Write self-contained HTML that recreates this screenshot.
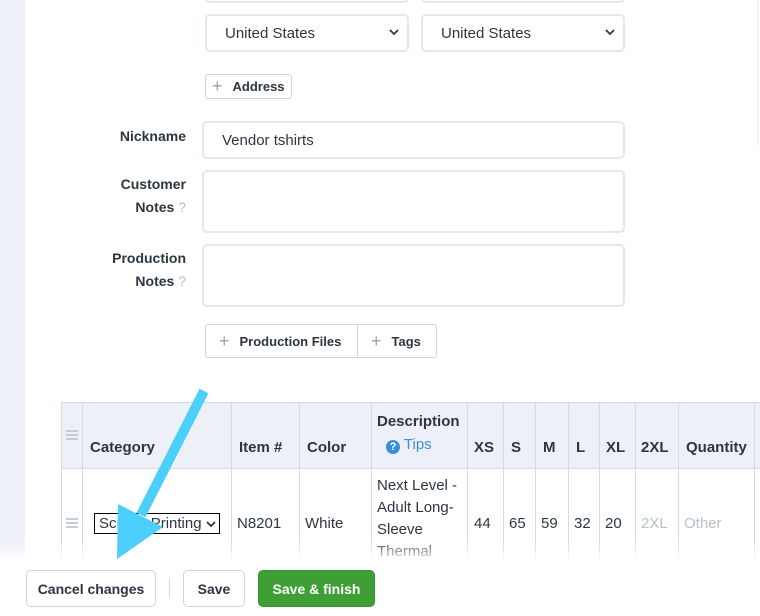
<!DOCTYPE html>
<html><head><style>
*{box-sizing:border-box;margin:0;padding:0}
body{width:760px;height:616px;overflow:hidden;background:#fff;font-family:"Liberation Sans",sans-serif;color:#2d3640;position:relative}
.a{position:absolute}
.inp{position:absolute;border:2px solid #e3e8ef;border-radius:5px;background:#fff;font-size:15px;color:#2d3640}
.lbl{position:absolute;font-weight:bold;font-size:14px;text-align:right;right:574px;line-height:23px}
.q{color:#b8c0c8;font-weight:normal}
.btn{position:absolute;border:1px solid #cfd5db;border-radius:3px;background:#fff;font-weight:bold;font-size:13px;color:#2d3640;display:flex;align-items:center}
.plus{color:#9aa3ab;font-weight:normal;font-size:18px;margin-right:10px}
table{table-layout:fixed}
th,td{border:1px solid #d5dbe2;font-size:15px;overflow:hidden;white-space:nowrap}
th{background:#edf0f7;font-weight:bold;text-align:left;padding:0 7px;vertical-align:bottom;padding-bottom:12px}
td{background:#fff;padding:0 5px;vertical-align:middle}
.fb{position:absolute;border:1px solid #cfd5db;border-radius:5px;background:#fff;font-size:14px;font-weight:bold;display:flex;align-items:center;justify-content:center}
.ham{display:inline-block;width:12px;height:10px;border-top:2px solid #c6ccd3;border-bottom:2px solid #c6ccd3;position:relative}
.ham:after{content:"";position:absolute;left:0;right:0;top:2px;border-top:2px solid #c6ccd3}
.chev{position:absolute;right:8px;top:12px}
</style></head><body>
<div class="a" style="left:0;top:0;width:25px;height:616px;background:#eef1f8"></div>
<div class="a" style="left:757px;top:0;width:2px;height:145px;background:#eef1f8"></div>
<div class="inp" style="left:205px;top:-10px;width:204px;height:13px"></div>
<div class="inp" style="left:421px;top:-10px;width:204px;height:13px"></div>
<div class="inp" style="left:205px;top:14px;width:204px;height:38px;padding:9px 0 0 18px">United States<svg class="chev" width="10" height="8"><path d="M1 2l4 4 4-4" stroke="#2d3640" stroke-width="1.8" fill="none"/></svg></div>
<div class="inp" style="left:421px;top:14px;width:204px;height:38px;padding:9px 0 0 18px">United States<svg class="chev" width="10" height="8"><path d="M1 2l4 4 4-4" stroke="#2d3640" stroke-width="1.8" fill="none"/></svg></div>
<div class="btn" style="left:205px;top:74px;width:87px;height:25px;padding-left:6px"><span class="plus">+</span>Address</div>
<div class="lbl" style="top:125px">Nickname</div>
<div class="inp" style="left:202px;top:121px;width:423px;height:38px;padding:9px 0 0 18px">Vendor tshirts</div>
<div class="lbl" style="top:173px">Customer<br>Notes <span class="q">?</span></div>
<div class="inp" style="left:202px;top:170px;width:423px;height:63px"></div>
<div class="lbl" style="top:247px">Production<br>Notes <span class="q">?</span></div>
<div class="inp" style="left:202px;top:244px;width:423px;height:63px"></div>
<div class="btn" style="left:205px;top:324px;width:153px;height:34px;padding-left:13px;border-radius:3px 0 0 3px"><span class="plus">+</span>Production Files</div>
<div class="btn" style="left:357px;top:324px;width:80px;height:34px;padding-left:13px;border-radius:0 3px 3px 0"><span class="plus">+</span>Tags</div>
<table class="a" style="left:61px;top:402px;border-collapse:collapse;width:700px">
<colgroup><col style="width:21px"><col style="width:149px"><col style="width:68px"><col style="width:72px"><col style="width:96px"><col style="width:36px"><col style="width:32px"><col style="width:33px"><col style="width:31px"><col style="width:36px"><col style="width:43px"><col style="width:76px"><col style="width:7px"></colgroup>
<tr style="height:66px">
<th style="padding:0 0 0 4px;vertical-align:top;padding-top:24px"><span class="ham"></span></th>
<th>Category</th><th>Item #</th><th>Color</th>
<th style="padding:0 0 12px 5px;line-height:23px">Description<br><span style="color:#3a8fd9;font-weight:normal;padding-left:9px"><span style="display:inline-block;width:14px;height:14px;border-radius:50%;background:#3a8fd9;color:#fff;font-size:11px;text-align:center;line-height:14px;font-weight:bold;vertical-align:-1px">?</span> Tips</span></th>
<th style="padding-left:6px">XS</th><th>S</th><th>M</th><th>L</th><th style="padding-left:6px">XL</th><th style="padding-left:5px">2XL</th><th style="padding-left:7px">Quantity</th><th></th></tr>
<tr style="height:110px">
<td style="padding:0 0 0 4px"><span class="ham"></span></td>
<td style="padding-left:11px"><span style="display:inline-block;border:1px solid #000;padding:1px 4px;font-size:15px;width:126px;height:21px;line-height:18px">Screen Printing <svg width="10" height="8"><path d="M1 2l4 4 4-4" stroke="#2d3640" stroke-width="1.8" fill="none"/></svg></span></td>
<td>N8201</td><td>White</td>
<td style="line-height:22px;vertical-align:top;padding-top:6px;white-space:normal">Next Level - Adult Long-Sleeve Thermal</td>
<td style="padding-left:6px">44</td><td>65</td><td>59</td><td>32</td><td>20</td><td style="color:#b8c0c8">2XL</td><td style="color:#b8c0c8">Other</td><td></td></tr>
</table>
<div class="a" style="left:0;top:540px;width:760px;height:20px;background:linear-gradient(rgba(255,255,255,0),rgba(255,255,255,0.9))"></div>
<div class="a" style="left:0;top:560px;width:760px;height:56px;background:#fff"></div>
<svg class="a" style="left:0;top:0" width="760" height="616"><line x1="204" y1="391" x2="141" y2="515" stroke="#4dcffb" stroke-width="10"/><polygon points="118,504 163,527 117,559" fill="#4dcffb"/></svg>
<div class="fb" style="left:26px;top:570px;width:130px;height:37px;font-weight:600">Cancel changes</div>
<div class="a" style="left:169px;top:578px;width:1px;height:20px;background:#d5dbe2"></div>
<div class="fb" style="left:183px;top:570px;width:62px;height:37px">Save</div>
<div class="fb" style="left:258px;top:570px;width:117px;height:37px;background:#3f9f37;border-color:#3a9232;color:#fff">Save &amp; finish</div>
</body></html>
